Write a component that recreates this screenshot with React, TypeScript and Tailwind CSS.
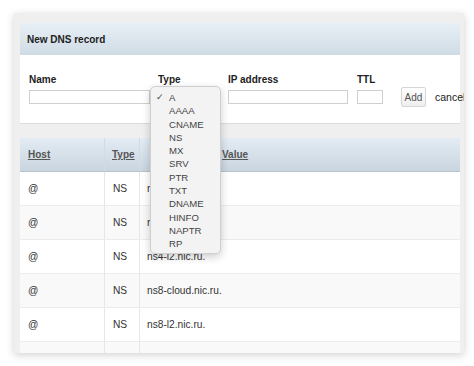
import React from "react";

const rows = [
  { host: "@", type: "NS", value: "ns3-l2.nic.ru." },
  { host: "@", type: "NS", value: "ns4-cl.nic.ru." },
  { host: "@", type: "NS", value: "ns4-l2.nic.ru." },
  { host: "@", type: "NS", value: "ns8-cloud.nic.ru." },
  { host: "@", type: "NS", value: "ns8-l2.nic.ru." },
  { host: "", type: "", value: "" },
];

const options = ["A", "AAAA", "CNAME", "NS", "MX", "SRV", "PTR", "TXT", "DNAME", "HINFO", "NAPTR", "RP"];

export default function App() {
  return (
    <div
      className="relative w-[474px] h-[366px] bg-white overflow-hidden"
      style={{ fontFamily: '"Liberation Sans", Arial, sans-serif' }}
    >
      <div className="ml-[14px] mt-[13px] w-[450px] h-[340px] bg-[#efefef] pl-[6px] pt-[10px] pr-[4px] shadow-[0_2px_8px_rgba(0,0,0,0.18)] overflow-hidden">
        <div className="h-[32px] bg-gradient-to-b from-[#e8f0f6] to-[#cfdbe4] flex items-center pl-[7px] text-[10px] font-bold text-[#222]">
          New DNS record
        </div>
        <div className="h-[68px] bg-white flex pt-[19px] text-[#222]">
          <div className="flex flex-col pl-[9px] w-[130px]">
            <span className="text-[10px] font-bold leading-[12px]">Name</span>
            <div className="mt-[4px] h-[14px] w-[121px] border border-[#cfcfcf]" />
          </div>
          <div className="flex flex-col w-[71px]">
            <span className="text-[10px] font-bold leading-[12px] pl-[8px]">Type</span>
            <div className="mt-[2px] h-[18px] w-[70px] border border-[#c8c8c8] rounded-[4px]" />
          </div>
          <div className="flex flex-col pl-[8px] w-[129px]">
            <span className="text-[10px] font-bold leading-[12px]">IP address</span>
            <div className="mt-[4px] h-[14px] w-[120px] border border-[#cfcfcf]" />
          </div>
          <div className="flex flex-col pl-[9px]">
            <span className="text-[10px] font-bold leading-[12px]">TTL</span>
            <div className="mt-[4px] h-[14px] w-[26px] border border-[#cfcfcf]" />
          </div>
          <div className="flex items-start pt-[13px] pl-[18px]">
            <div className="h-[20px] w-[25px] border border-[#d6d6d6] rounded-[2px] bg-gradient-to-b from-white to-[#eeeeee] text-[10px] text-[#555] flex items-center justify-center">
              Add
            </div>
            <span className="ml-[9px] mt-[3px] text-[10.5px] text-[#222] whitespace-nowrap">cancel</span>
          </div>
        </div>
        <div className="h-[15px] border-t border-[#dcdcdc]" />
        <div className="bg-white">
          <div className="h-[34px] flex bg-gradient-to-b from-[#e3ecf4] to-[#c9d5df] border-b border-[#b8c3cc] text-[10px] font-bold text-[#555]">
            <div className="w-[85px] flex items-center pl-[8px] border-r border-[#d2dbe2]">
              <span className="underline">Host</span>
            </div>
            <div className="w-[35px] flex items-center pl-[7px] border-r border-[#d2dbe2]">
              <span className="underline">Type</span>
            </div>
            <div className="flex-1 flex items-center pl-[82px]">
              <span className="underline">Value</span>
            </div>
          </div>
          {rows.map((r, i) => (
            <div
              key={i}
              className={`h-[34px] flex text-[10.2px] text-[#333] border-b border-[#ececec] ${i % 2 === 1 ? "bg-[#f9f9f9]" : "bg-white"}`}
            >
              <div className="w-[85px] flex items-center pl-[8px] border-r border-[#e6e6e6]">{r.host}</div>
              <div className="w-[35px] flex items-center pl-[8px] border-r border-[#e6e6e6]">{r.type}</div>
              <div className="flex-1 flex items-center pl-[7px]">{r.value}</div>
            </div>
          ))}
        </div>
      </div>

      <div className="absolute left-[150px] top-[86px] w-[71px] h-[168px] bg-[#f3f3f3] border border-[#cfcfcf] rounded-[5px] shadow-[0_3px_8px_rgba(0,0,0,0.2)] pt-[4px] text-[9.6px] text-[#444]">
        {options.map((o, i) => (
          <div key={o} className="relative h-[13.3px] leading-[13px] pl-[18px]">
            {i === 0 && <span className="absolute left-[5px] top-0 text-[9px]">✓</span>}
            {o}
          </div>
        ))}
      </div>
    </div>
  );
}
